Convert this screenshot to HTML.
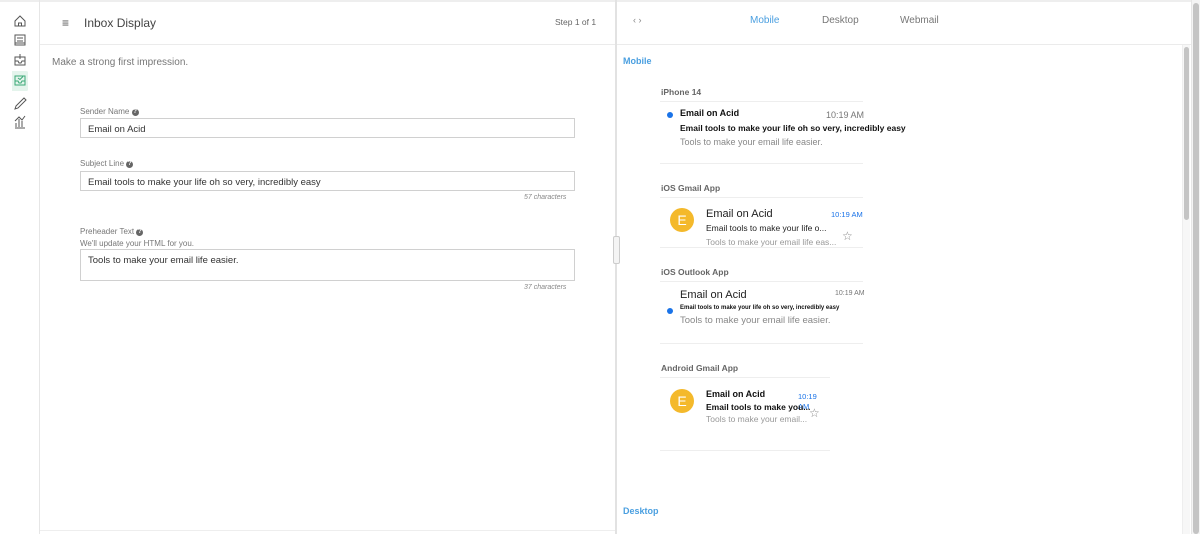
<!DOCTYPE html>
<html><head><style>
*{margin:0;padding:0;box-sizing:border-box}
body{width:1200px;height:534px;overflow:hidden;background:#fff;font-family:"Liberation Sans",sans-serif;position:relative;color:#333}
.a{position:absolute;white-space:nowrap}
.inp{position:absolute;border:1px solid #d0d0d0;background:#fff;font-size:9.5px;color:#333;padding:5px 7px}
.lbl{font-size:8px;color:#777}
.q{display:inline-block;width:7px;height:7px;border-radius:50%;background:#666;color:#fff;font-size:6px;text-align:center;line-height:7px;font-weight:bold;vertical-align:1px}
.cnt{font-size:7px;color:#888;font-style:italic}
.sec{font-size:8.5px;font-weight:bold;color:#666}
.hr{position:absolute;height:1px;background:#eee}
.av{position:absolute;width:24px;height:24px;border-radius:50%;background:#f4b92b;color:#fff;font-size:14px;text-align:center;line-height:24px}
.dot{position:absolute;width:6px;height:6px;border-radius:50%;background:#1a73e8}
</style></head><body>
<div class="a" style="left:0;top:0;width:1200px;height:2px;background:#eee"></div>
<div class="a" style="left:39px;top:0;width:1px;height:534px;background:#e6e6e6"></div>
<svg class="a" style="left:12px;top:13px" width="16" height="120" fill="none" stroke="#555" stroke-width="1">
<path d="M3 8 L8 3 L13 8 V13 H3 Z M6.5 13 V10 H9.5 V13"/>
<rect x="3" y="22" width="10" height="10"/><path d="M5 25 H11 M5 28 H11 M3 30 H13"/>
<path d="M3 44 H13 V52 H3 Z M3 48 H6 L7 50 H9 L10 48 H13 M8 41 V46"/>
<rect x="-3" y="58" width="20" height="20" rx="3" fill="#e4f4ec" stroke="none"/>
<path d="M3 63 H13 V72 H3 Z M3 68 H6 L7 70 H9 L10 68 H13 M6 65 L8 66.5 L11 63.5" stroke="#3aa876"/>
<path d="M4 93 L12 85 L14 87 L6 95 L3 96 Z"/>
<path d="M3 115 H13 M4 114 V110 M7 114 V106 M10 114 V108 M3 108 L7 104 L10 107 L13 103"/>
</svg>
<div class="a" style="left:40px;top:44px;width:576px;height:1px;background:#ebebeb"></div>
<div class="a" style="left:62px;top:16px;font-size:12px;color:#555">≡</div>
<div class="a" style="left:84px;top:16px;font-size:12px;color:#444">Inbox Display</div>
<div class="a" style="left:555px;top:17px;font-size:8.5px;color:#666">Step 1 of 1</div>
<div class="a" style="left:52px;top:57px;font-size:10px;color:#777">Make a strong first impression.</div>
<div class="a lbl" style="left:80px;top:107px">Sender Name <span class="q">?</span></div>
<div class="inp" style="left:80px;top:118px;width:495px;height:20px">Email on Acid</div>
<div class="a lbl" style="left:80px;top:159px">Subject Line <span class="q">?</span></div>
<div class="inp" style="left:80px;top:171px;width:495px;height:20px">Email tools to make your life oh so very, incredibly easy</div>
<div class="a cnt" style="left:524px;top:194px">57 characters</div>
<div class="a lbl" style="left:80px;top:227px">Preheader Text <span class="q">?</span></div>
<div class="a lbl" style="left:80px;top:239px">We'll update your HTML for you.</div>
<div class="inp" style="left:80px;top:249px;width:495px;height:32px">Tools to make your email life easier.</div>
<div class="a cnt" style="left:524px;top:284px">37 characters</div>
<div class="a" style="left:40px;top:530px;width:576px;height:1px;background:#eee"></div>
<div class="a" style="left:615px;top:0;width:2px;height:534px;background:#e2e2e2"></div>
<div class="a" style="left:613px;top:236px;width:7px;height:28px;border:1px solid #ccc;border-radius:2px;background:#f4f4f4"></div>
<div class="a" style="left:617px;top:44px;width:574px;height:1px;background:#ebebeb"></div>
<div class="a" style="left:633px;top:15px;font-size:9px;color:#888">‹ ›</div>
<div class="a" style="left:750px;top:15px;font-size:10px;color:#4a9fe0">Mobile</div>
<div class="a" style="left:822px;top:15px;font-size:10px;color:#777">Desktop</div>
<div class="a" style="left:900px;top:15px;font-size:10px;color:#777">Webmail</div>
<div class="a" style="left:623px;top:56px;font-size:9px;font-weight:bold;color:#4a9fe0">Mobile</div>
<div class="a" style="left:623px;top:506px;font-size:9px;font-weight:bold;color:#4a9fe0">Desktop</div>
<div class="a sec" style="left:661px;top:87px">iPhone 14</div>
<div class="hr" style="left:660px;top:101px;width:203px"></div>
<div class="dot" style="left:667px;top:112px"></div>
<div class="a" style="left:680px;top:108px;font-size:9px;font-weight:bold;color:#111">Email on Acid</div>
<div class="a" style="left:826px;top:110px;font-size:9px;color:#777">10:19 AM</div>
<div class="a" style="left:680px;top:123px;font-size:8.5px;font-weight:bold;color:#111">Email tools to make your life oh so very, incredibly easy</div>
<div class="a" style="left:680px;top:137px;font-size:9px;color:#888">Tools to make your email life easier.</div>
<div class="hr" style="left:660px;top:163px;width:203px"></div>
<div class="a sec" style="left:661px;top:183px">iOS Gmail App</div>
<div class="hr" style="left:660px;top:197px;width:203px"></div>
<div class="av" style="left:670px;top:208px">E</div>
<div class="a" style="left:706px;top:208px;font-size:11px;color:#222">Email on Acid</div>
<div class="a" style="left:831px;top:210px;font-size:7.5px;color:#1a73e8">10:19 AM</div>
<div class="a" style="left:706px;top:223px;font-size:8.5px;color:#222">Email tools to make your life o...</div>
<div class="a" style="left:706px;top:237px;font-size:8.5px;color:#999;width:132px;overflow:hidden">Tools to make your email life eas...</div>
<div class="a" style="left:842px;top:229px;font-size:12px;color:#888">☆</div>
<div class="hr" style="left:660px;top:247px;width:203px"></div>
<div class="a sec" style="left:661px;top:267px">iOS Outlook App</div>
<div class="hr" style="left:660px;top:281px;width:203px"></div>
<div class="a" style="left:680px;top:289px;font-size:11px;color:#222">Email on Acid</div>
<div class="a" style="left:835px;top:290px;font-size:7px;color:#777">10:19 AM</div>
<div class="dot" style="left:667px;top:308px"></div>
<div class="a" style="left:680px;top:305px;font-size:6px;font-weight:bold;color:#111">Email tools to make your life oh so very, incredibly easy</div>
<div class="a" style="left:680px;top:315px;font-size:9.5px;color:#888">Tools to make your email life easier.</div>
<div class="hr" style="left:660px;top:343px;width:203px"></div>
<div class="a sec" style="left:661px;top:363px">Android Gmail App</div>
<div class="hr" style="left:660px;top:377px;width:170px"></div>
<div class="av" style="left:670px;top:389px">E</div>
<div class="a" style="left:706px;top:389px;font-size:9px;font-weight:bold;color:#111">Email on Acid</div>
<div class="a" style="left:798px;top:392px;font-size:7.5px;color:#1a73e8;line-height:10px">10:19<br>AM</div>
<div class="a" style="left:706px;top:402px;font-size:8.5px;font-weight:bold;color:#111">Email tools to make you...</div>
<div class="a" style="left:706px;top:414px;font-size:8.5px;color:#999">Tools to make your email...</div>
<div class="a" style="left:809px;top:406px;font-size:12px;color:#888">☆</div>
<div class="hr" style="left:660px;top:450px;width:170px"></div>
<div class="a" style="left:1182px;top:45px;width:8px;height:489px;background:#f7f7f7;border-left:1px solid #eee"></div>
<div class="a" style="left:1184px;top:47px;width:5px;height:173px;background:#c4c4c4;border-radius:3px"></div>
<div class="a" style="left:1191px;top:0;width:9px;height:534px;background:#f4f4f4;border-left:1px solid #e6e6e6"></div>
<div class="a" style="left:1193px;top:3px;width:6px;height:531px;background:#c4c4c4;border-radius:3px"></div>
</body></html>
